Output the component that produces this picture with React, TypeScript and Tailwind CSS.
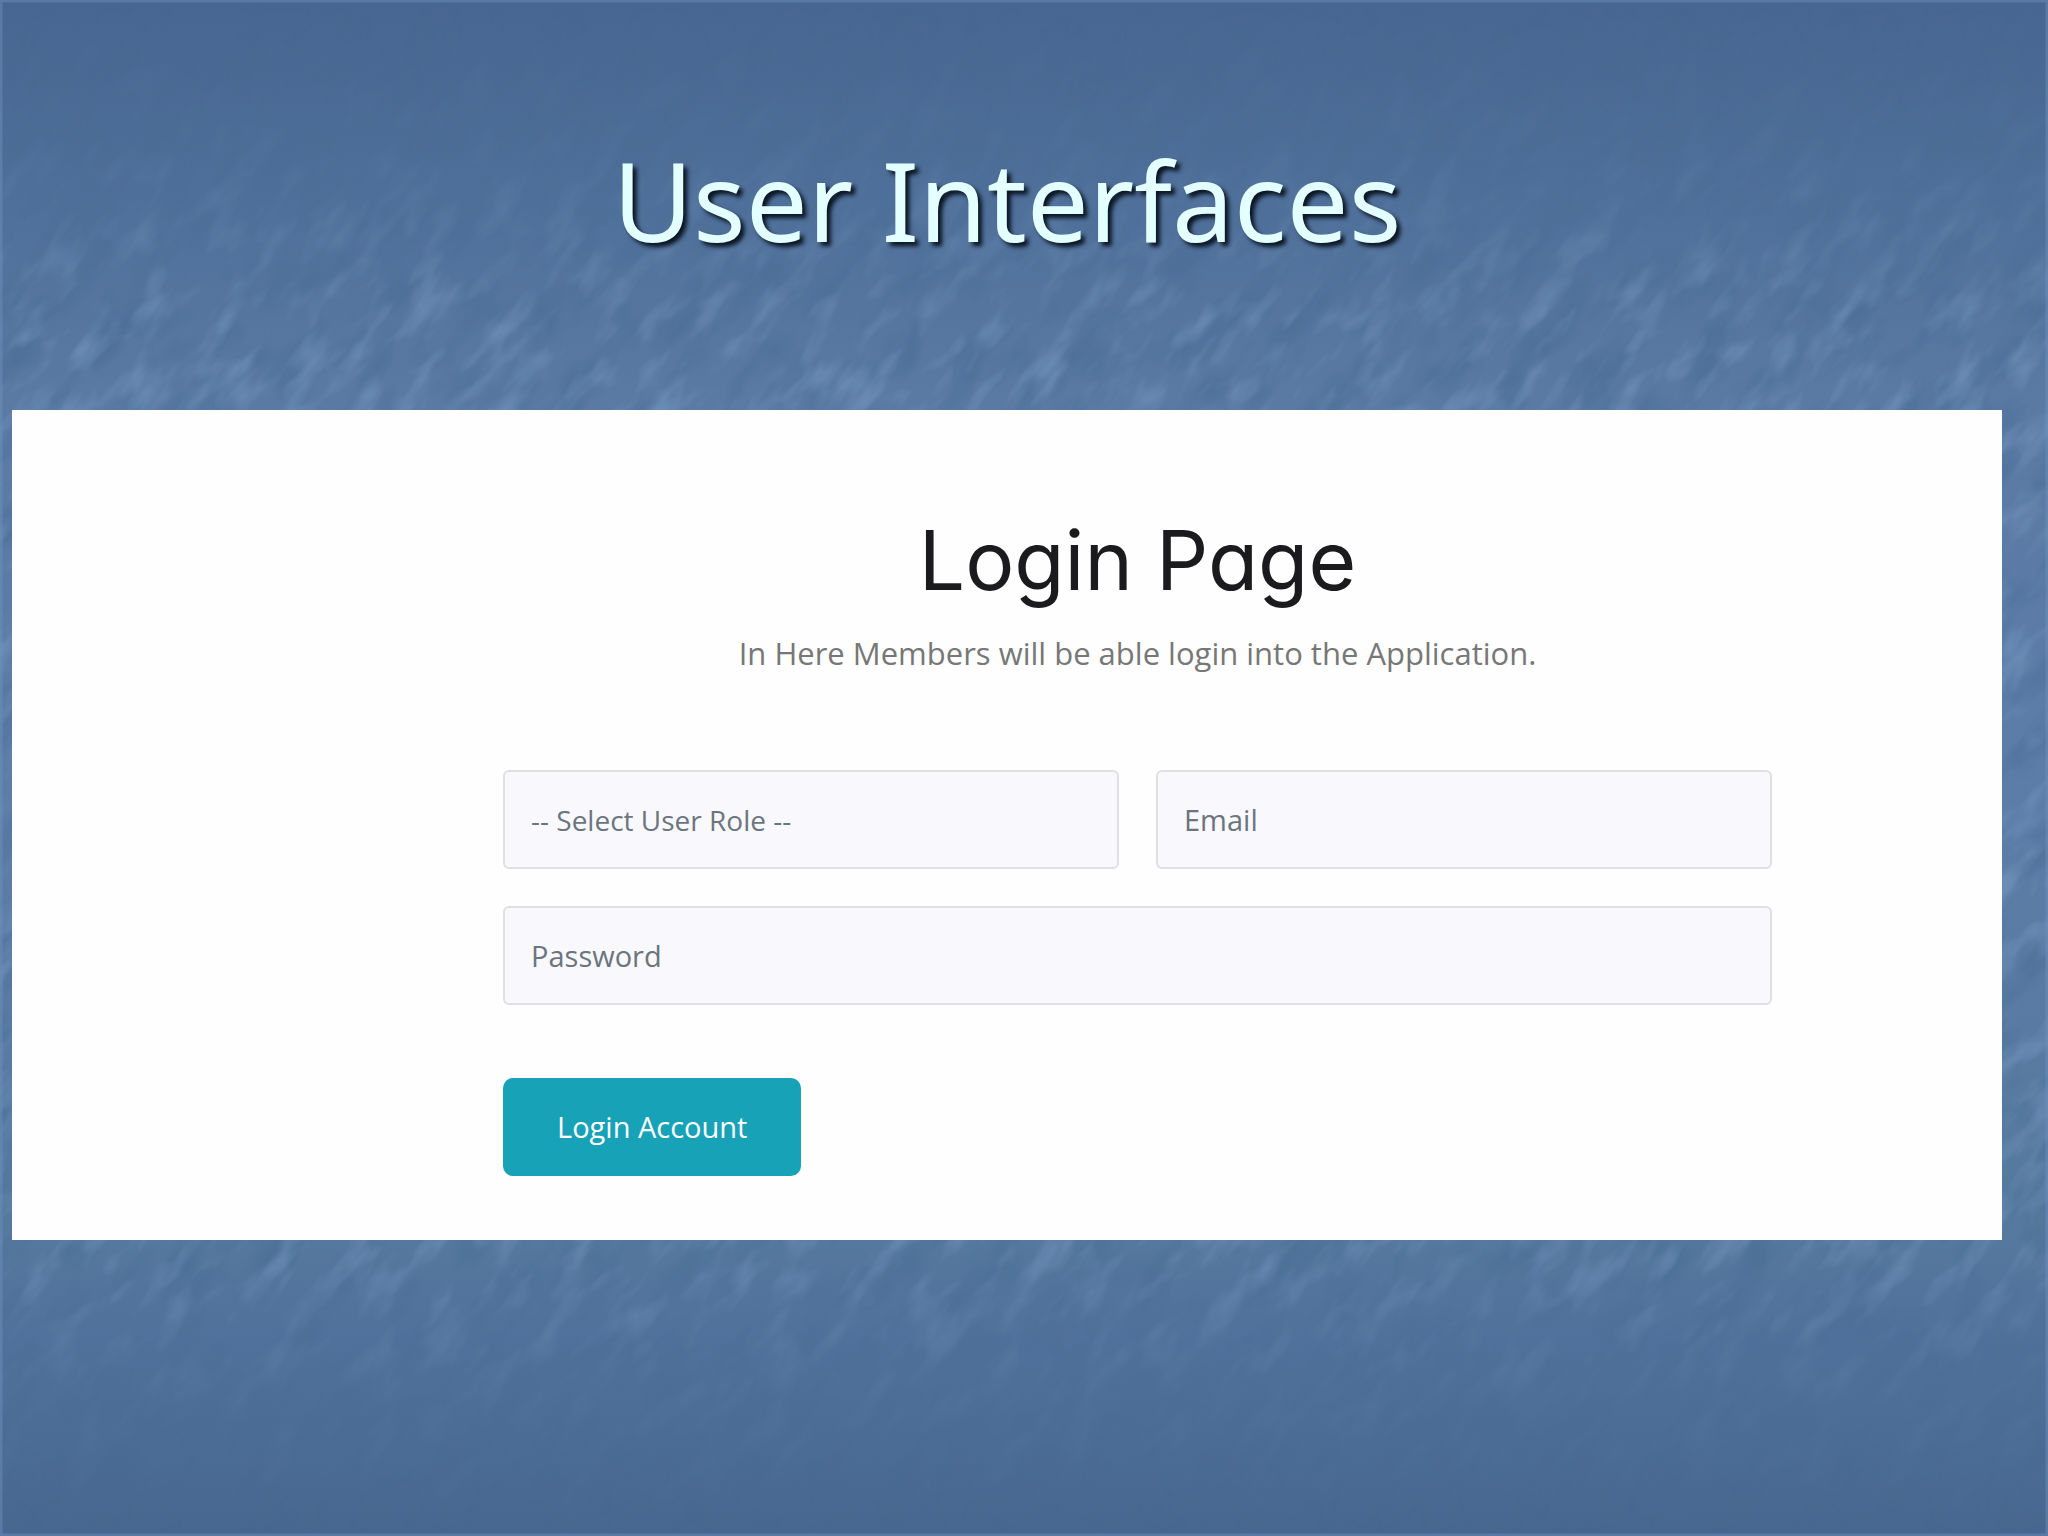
function SlideBackground() {
  return (
    <svg
      className="absolute inset-0 h-full w-full"
      viewBox="0 0 2048 1536"
      preserveAspectRatio="none"
      aria-hidden="true"
    >
      <defs>
        <linearGradient id="sky" x1="0" y1="0" x2="0" y2="1">
          <stop offset="0" stopColor="#486692" />
          <stop offset="0.08" stopColor="#4b6c96" />
          <stop offset="0.15" stopColor="#50719b" />
          <stop offset="0.26" stopColor="#5a7aa4" />
          <stop offset="0.5" stopColor="#5c7da8" />
          <stop offset="0.8" stopColor="#56799f" />
          <stop offset="0.87" stopColor="#50719b" />
          <stop offset="0.93" stopColor="#4b6d96" />
          <stop offset="1" stopColor="#486790" />
        </linearGradient>
        <linearGradient id="band" x1="0" y1="0" x2="0" y2="1">
          <stop offset="0" stopColor="#fff" stopOpacity="0" />
          <stop offset="0.1" stopColor="#fff" stopOpacity="0.15" />
          <stop offset="0.16" stopColor="#fff" stopOpacity="0.5" />
          <stop offset="0.22" stopColor="#fff" stopOpacity="1" />
          <stop offset="0.8" stopColor="#fff" stopOpacity="1" />
          <stop offset="0.85" stopColor="#fff" stopOpacity="0.55" />
          <stop offset="0.9" stopColor="#fff" stopOpacity="0.2" />
          <stop offset="1" stopColor="#fff" stopOpacity="0" />
        </linearGradient>
        <mask id="fade">
          <rect width="2048" height="1536" fill="url(#band)" />
        </mask>
        <filter id="light" x="0" y="0" width="1" height="1" colorInterpolationFilters="sRGB">
          <feTurbulence type="fractalNoise" baseFrequency="0.016 0.04" numOctaves="3" seed="7" />
          <feColorMatrix values="0 0 0 0 0.47  0 0 0 0 0.6  0 0 0 0 0.76  3 0 0 0 -1.45" />
        </filter>
        <filter id="dark" x="0" y="0" width="1" height="1" colorInterpolationFilters="sRGB">
          <feTurbulence type="fractalNoise" baseFrequency="0.014 0.03" numOctaves="3" seed="23" />
          <feColorMatrix values="0 0 0 0 0.27  0 0 0 0 0.41  0 0 0 0 0.57  3 0 0 0 -1.4" />
        </filter>
      </defs>
      <rect width="2048" height="1536" fill="url(#sky)" />
      <g mask="url(#fade)">
        <g transform="rotate(-52 1024 768)">
          <rect x="-400" y="-600" width="2848" height="2736" filter="url(#dark)" opacity="0.45" />
          <rect x="-400" y="-600" width="2848" height="2736" filter="url(#light)" opacity="0.55" />
        </g>
      </g>
      <rect x="1" y="1" width="2046" height="1534" fill="none" stroke="#6f93c0" strokeOpacity="0.45" strokeWidth="3" />
    </svg>
  );
}

const field =
  "h-[99px] w-full appearance-none rounded-md border-2 border-[#dfe0e6] bg-[#f9f9fd] px-[26px] text-[#6c757d] outline-none placeholder:text-[#6c757d] placeholder:opacity-100";

export default function App() {
  return (
    <main className="relative min-h-screen overflow-hidden bg-[#50719b] font-['Open_Sans',sans-serif]">
      <SlideBackground />
      <div className="relative pr-[46px] pl-3">
        <header className="flex h-[410px] justify-center pt-[120px]">
          <h1 className="font-['Noto_Sans',sans-serif] text-[110px] leading-[158px] whitespace-nowrap text-[#e3ffff] [text-shadow:4px_4px_4px_#0b1522]">
            User Interfaces
          </h1>
        </header>
        <section className="grid grid-cols-[491fr_1269fr_230fr] bg-[#fefefe] pt-[104px] pb-16">
          <div className="col-start-2">
            <h2 className="text-center font-['Inter',sans-serif] text-[82px] leading-[94px] text-[#1b1b1d] [font-feature-settings:'cv11']">
              Login Page
            </h2>
            <p className="mt-6 text-center text-[31px] leading-[42px] text-[#777]">
              In Here Members will be able login into the Application.
            </p>
            <form className="mt-24" onSubmit={(e) => e.preventDefault()}>
              <div className="grid grid-cols-2 gap-[37px]">
                <select aria-label="User role" defaultValue="" className={`${field} text-[28px]`}>
                  <option value="">-- Select User Role --</option>
                  <option value="admin">Admin</option>
                  <option value="member">Member</option>
                </select>
                <input type="email" aria-label="Email" placeholder="Email" className={`${field} text-[29px]`} />
                <input
                  type="password"
                  aria-label="Password"
                  placeholder="Password"
                  className={`${field} col-span-2 text-[29px]`}
                />
              </div>
              <button
                type="submit"
                className="mt-[73px] block h-[98px] rounded-[10px] bg-[#17a2b8] px-[54px] text-[29px] text-white"
              >
                Login Account
              </button>
            </form>
          </div>
        </section>
      </div>
    </main>
  );
}
